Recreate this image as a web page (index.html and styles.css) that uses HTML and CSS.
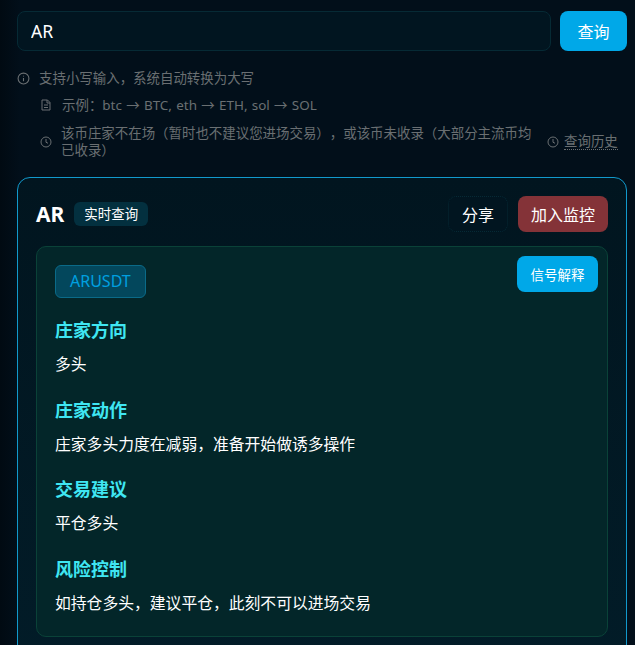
FILE: index.html
```html
<!DOCTYPE html>
<html lang="zh-CN">
<head>
    <meta charset="UTF-8">
    <meta name="viewport" content="width=device-width, initial-scale=1.0">
    <title>庄家查询</title>
    <link rel="stylesheet" href="styles.css">
</head>
<body>
    <div class="container">
        <div class="search-row">
            <input class="search-input" type="text" value="AR">
            <button class="search-btn">查询</button>
        </div>

        <div class="hints">
            <div class="hint hint-main">
                <svg class="icon" viewBox="0 0 24 24"><circle cx="12" cy="12" r="10"/><path d="M12 11v6M12 7v1.5"/></svg>
                <span>支持小写输入，系统自动转换为大写</span>
            </div>
            <div class="hint hint-sub hint-example">
                <svg class="icon" viewBox="0 0 24 24"><path d="M4 2h11l5 5v15H4z"/><path d="M14 2v6h6M8 12h8M8 17h8"/></svg>
                <span>示例：btc → BTC, eth → ETH, sol → SOL</span>
            </div>
            <div class="hint-row">
                <div class="hint hint-sub hint-long">
                    <svg class="icon" viewBox="0 0 24 24"><circle cx="12" cy="12" r="10"/><path d="M12 6v6.5l4 2"/></svg>
                    <span>该币庄家不在场（暂时也不建议您进场交易），或该币未收录（大部分主流币均已收录）</span>
                </div>
                <a class="history-link">
                    <svg class="icon" viewBox="0 0 24 24"><circle cx="12" cy="12" r="10"/><path d="M12 6v6.5l4 2"/></svg>
                    <span>查询历史</span>
                </a>
            </div>
        </div>

        <div class="result-card">
            <div class="result-header">
                <div class="result-title">
                    <span class="coin-name">AR</span>
                    <span class="live-tag">实时查询</span>
                </div>
                <div class="result-actions">
                    <button class="btn-share">分享</button>
                    <button class="btn-monitor">加入监控</button>
                </div>
            </div>

            <div class="signal-card">
                <button class="btn-explain">信号解释</button>
                <span class="pair-tag">ARUSDT</span>

                <h3>庄家方向</h3>
                <p>多头</p>
                <h3>庄家动作</h3>
                <p>庄家多头力度在减弱，准备开始做诱多操作</p>
                <h3>交易建议</h3>
                <p>平仓多头</p>
                <h3>风险控制</h3>
                <p>如持仓多头，建议平仓，此刻不可以进场交易</p>
            </div>
        </div>
    </div>
</body>
</html>
```

FILE: styles.css
```css
html, body {
    height: 645px;
    overflow: hidden;
}

body {
    margin: 0;
    background: linear-gradient(to right, #010a12, #020f1a 20px);
    color: #fff;
    font-family: "Noto Sans", "Noto Sans CJK SC", sans-serif;
    text-spacing-trim: space-all;
}

.container {
    padding: 11px 8px 0 17px;
}

.search-row {
    display: flex;
    gap: 9px;
}

.search-input {
    flex: 1;
    min-width: 0;
    height: 40px;
    box-sizing: border-box;
    padding: 0 13px;
    background-color: #011520;
    color: #fff;
    border: 1px solid #062a35;
    border-radius: 8px;
    font-family: inherit;
    font-size: 17.6px;
}

button {
    font-family: inherit;
    cursor: pointer;
    border: none;
    color: #fff;
}

.search-btn {
    width: 67px;
    height: 40px;
    background-color: #00a8e8;
    border-radius: 8px;
    font-size: 16px;
}

.hints {
    margin-top: 18px;
    font-size: 13.44px;
    color: #6a6f72;
}

.hint {
    display: flex;
    align-items: center;
    gap: 9px;
}

.hint-main {
    line-height: 18px;
}

.hint-sub {
    padding-left: 23px;
    line-height: 17px;
}

.hint-example {
    gap: 10px;
    margin-top: 9px;
    line-height: 18px;
    word-spacing: 0.8px;
}

.hint-row {
    display: flex;
    align-items: center;
    margin-top: 11px;
}

.hint-long {
    box-sizing: border-box;
    width: 516px;
    flex: none;
}

.history-link {
    display: flex;
    align-items: center;
    gap: 5px;
    margin-left: 14px;
    white-space: nowrap;
}

.history-link span {
    border-bottom: 1px dotted #6a6f72;
    line-height: 15px;
}

.icon {
    width: 12px;
    height: 12px;
    flex: none;
    fill: none;
    stroke: #6a6f72;
    stroke-width: 2;
}

.hint-main .icon {
    width: 13px;
    height: 13px;
}

.result-card {
    margin-top: 18px;
    padding: 18px 18px 40px;
    background: linear-gradient(#01151f, #021c28);
    border: 1px solid #1199cc;
    border-radius: 13px;
}

.result-header {
    display: flex;
    justify-content: space-between;
    align-items: center;
}

.result-title {
    display: flex;
    align-items: center;
    gap: 10px;
}

.coin-name {
    font-size: 21px;
    font-weight: bold;
}

.live-tag {
    padding: 0 10px;
    height: 24px;
    line-height: 24px;
    background-color: #03303f;
    border-radius: 6px;
    font-size: 13.44px;
}

.result-actions {
    display: flex;
    gap: 10px;
}

.btn-share {
    width: 60px;
    height: 36px;
    background-color: #011520;
    border: 1px dotted #062a35;
    border-radius: 8px;
    font-size: 16px;
}

.btn-monitor {
    width: 90px;
    height: 36px;
    background-color: #843338;
    border-radius: 8px;
    font-size: 16px;
}

.signal-card {
    position: relative;
    margin-top: 14px;
    padding: 18px 18px 21.5px;
    background-color: #032629;
    border: 1px solid #0a4238;
    border-radius: 10px;
}

.btn-explain {
    position: absolute;
    top: 9px;
    right: 9px;
    width: 81px;
    height: 36px;
    background-color: #00a8e8;
    border-radius: 8px;
    font-size: 13.44px;
}

.pair-tag {
    display: inline-block;
    box-sizing: border-box;
    height: 33px;
    line-height: 31px;
    padding: 0 14px;
    background-color: #03475c;
    border: 1px solid #0a6a88;
    border-radius: 6px;
    color: #00a0e0;
    font-size: 16px;
}

.signal-card h3 {
    margin: 20.5px 0 0;
    color: #3fe6f2;
    font-size: 18px;
    line-height: 26px;
}

.pair-tag + h3 {
    margin-top: 19px;
}

.signal-card p {
    margin: 9px 0 0;
    font-size: 15.8px;
    line-height: 24px;
}
```
